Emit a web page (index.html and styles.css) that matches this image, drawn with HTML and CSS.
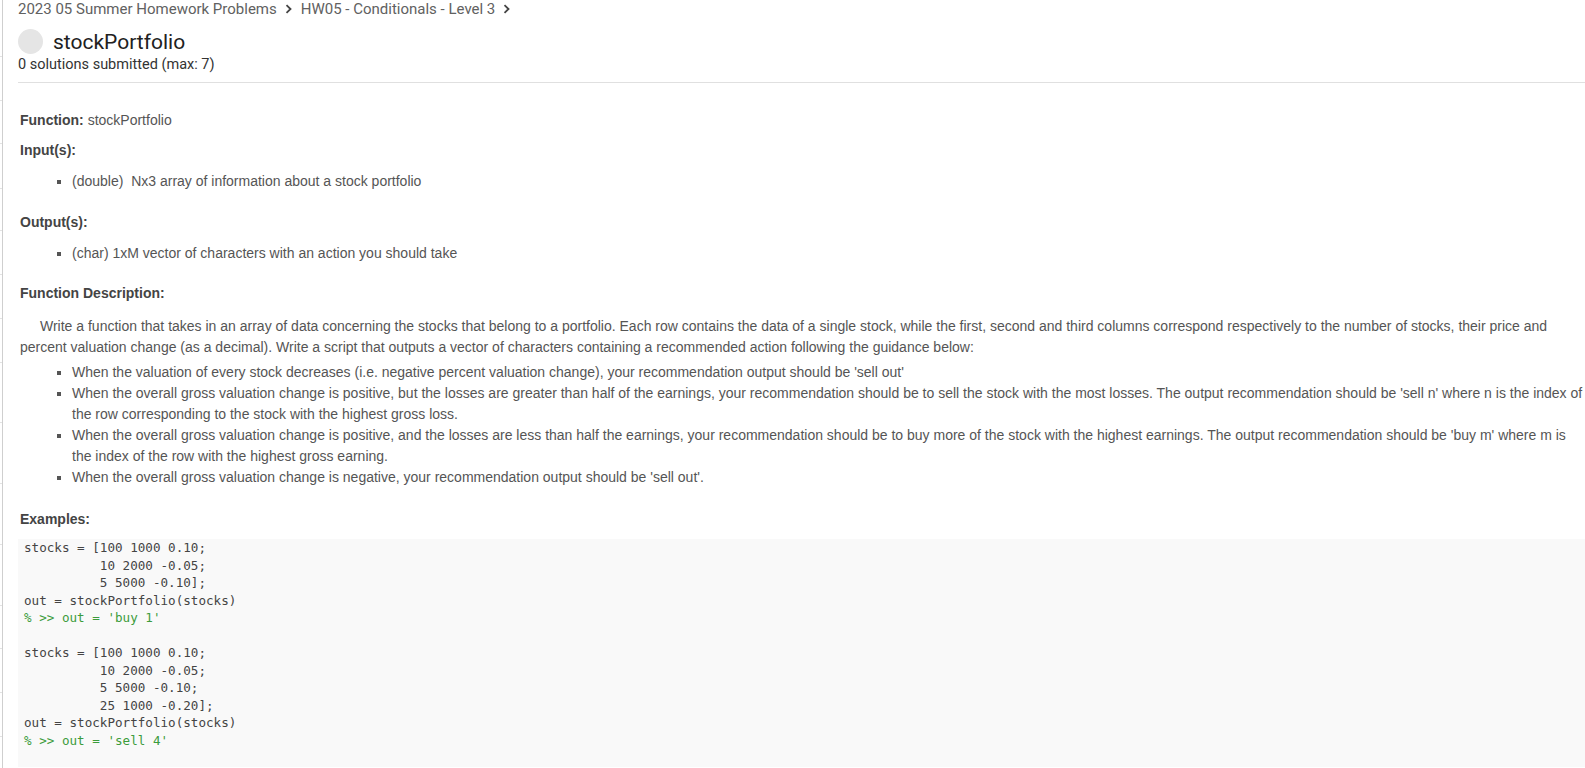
FILE: index.html
```html
<!DOCTYPE html>
<html>
<head>
<meta charset="utf-8">
<link rel="stylesheet" href="styles.css">
</head>
<body>
<div class="page">
  <div class="side">
    <div class="srow" style="height:57px"></div>
    <div class="srow" style="height:44px"></div>
    <div class="srow" style="height:43px"></div>
    <div class="srow" style="height:45px"></div>
    <div class="srow" style="height:42px"></div>
    <div class="srow" style="height:44px"></div>
    <div class="srow" style="height:44px"></div>
    <div class="srow" style="height:44px"></div>
    <div class="srow" style="height:60px"></div>
    <div class="srow" style="height:61px"></div>
    <div class="srow" style="height:61px"></div>
    <div class="srow" style="height:61px"></div>
    <div class="srow" style="height:43px"></div>
    <div class="srow" style="height:44px"></div>
    <div class="srow" style="height:44px"></div>
  </div>
  <div class="main">
    <div class="crumbs">
      <span>2023 05 Summer Homework Problems</span>
      <svg class="chev" width="8" height="10" viewBox="0 0 8 10"><path d="M1.5 1.2 L5.5 5 L1.5 8.8" fill="none" stroke="#444" stroke-width="1.8"/></svg>
      <span>HW05 - Conditionals - Level 3</span>
      <svg class="chev" width="8" height="10" viewBox="0 0 8 10"><path d="M1.5 1.2 L5.5 5 L1.5 8.8" fill="none" stroke="#444" stroke-width="1.8"/></svg>
    </div>
    <div class="title-row">
      <span class="dot"></span>
      <h1 class="title">stockPortfolio</h1>
    </div>
    <div class="subs">0 solutions submitted (max: 7)</div>
    <div class="rule"></div>

    <div class="desc">
      <p class="first"><b>Function:</b> stockPortfolio</p>
      <p><b>Input(s):</b></p>
      <ul class="io">
        <li>(double)&nbsp; Nx3 array of information about a stock portfolio</li>
      </ul>
      <p><b>Output(s):</b></p>
      <ul class="io">
        <li>(char) 1xM vector of characters with an action you should take</li>
      </ul>
      <p><b>Function Description:</b></p>
      <p class="para">Write a function that takes in an array of data concerning the stocks that belong to a portfolio. Each row contains the data of a single stock, while the first, second and third columns correspond respectively to the number of stocks, their price and percent valuation change (as a decimal). Write a script that outputs a vector of characters containing a recommended action following the guidance below:</p>
      <ul class="rules">
        <li>When the valuation of every stock decreases (i.e. negative percent valuation change), your recommendation output should be 'sell out'</li>
        <li>When the overall gross valuation change is positive, but the losses are greater than half of the earnings, your recommendation should be to sell the stock with the most losses. The output recommendation should be 'sell n' where n is the index of the row corresponding to the stock with the highest gross loss.</li>
        <li>When the overall gross valuation change is positive, and the losses are less than half the earnings, your recommendation should be to buy more of the stock with the highest earnings. The output recommendation should be 'buy m' where m is the index of the row with the highest gross earning.</li>
        <li>When the overall gross valuation change is negative, your recommendation output should be 'sell out'.</li>
      </ul>
      <p class="ex"><b>Examples:</b></p>
      <pre class="code">stocks = [100 1000 0.10;
          10 2000 -0.05;
          5 5000 -0.10];
out = stockPortfolio(stocks)
<span class="cm">% &gt;&gt; out = 'buy 1'</span>

stocks = [100 1000 0.10;
          10 2000 -0.05;
          5 5000 -0.10;
          25 1000 -0.20];
out = stockPortfolio(stocks)
<span class="cm">% &gt;&gt; out = 'sell 4'</span>

</pre>
    </div>
  </div>
</div>
</body>
</html>
```

FILE: styles.css
```css
html, body {
  margin: 0;
  padding: 0;
  background: #fff;
  overflow: hidden;
}
.page {
  display: flex;
  align-items: flex-start;
  width: 1585px;
  height: 768px;
  overflow: hidden;
}
.side {
  width: 2px;
  flex: none;
  border-right: 1px solid #cfcfcf;
  height: 768px;
  display: flex;
  flex-direction: column;
}
.srow {
  flex: none;
  box-sizing: border-box;
  border-bottom: 1px solid #e3e3e3;
}
.main {
  flex: 1;
  padding-left: 15px;
  min-width: 0;
}
.crumbs {
  display: flex;
  align-items: center;
  gap: 6px;
  font-family: Roboto, "Liberation Sans", sans-serif;
  font-size: 15px;
  color: #616161;
  height: 18px;
  line-height: 18px;
  margin-top: 0;
}
.chev {
  margin: 0 2px 0 2px;
}
.title-row {
  display: flex;
  align-items: center;
  gap: 10px;
  margin-top: 11px;
  height: 25px;
}
.dot {
  width: 25px;
  height: 25px;
  border-radius: 50%;
  background: #e5e5e5;
  flex: none;
}
.title {
  margin: 0;
  font-family: Roboto, "Liberation Sans", sans-serif;
  font-weight: 400;
  font-size: 21px;
  color: #212121;
  line-height: 25px;
  position: relative;
  top: 1px;
}
.subs {
  font-family: Roboto, "Liberation Sans", sans-serif;
  font-size: 14.5px;
  color: #333;
  line-height: 18px;
  margin-top: 2px;
}
.rule {
  height: 1px;
  background: #e0e0e0;
  margin-top: 8px;
}
.desc {
  font-family: "Liberation Sans", Arial, sans-serif;
  font-size: 14px;
  line-height: 20px;
  color: #555;
  padding-top: 27px;
  padding-left: 2px;
}
.desc p {
  margin: 0 0 10px 0;
}
.desc b {
  color: #444;
}
.io {
  list-style: square;
  margin: 11px 0 20.5px 0;
  padding-left: 52px;
}
.desc p.para {
  text-indent: 20px;
  line-height: 21px;
  margin-top: 12.5px;
  margin-bottom: 0;
}
.rules {
  list-style: square;
  line-height: 21px;
  margin: 4px 0 21.5px 0;
  padding-left: 52px;
}
.rules li {
  margin: 0;
}
.desc p.ex {
  margin-bottom: 10px;
}
.code {
  margin: 0 0 0 -2px;
  padding: 0 6px;
  background: #f9f9f9;
  font-family: "DejaVu Sans Mono", "Liberation Mono", monospace;
  font-size: 12.6px;
  line-height: 17.5px;
  color: #444;
  white-space: pre;
}
.cm {
  color: #3c9c3c;
}
```
